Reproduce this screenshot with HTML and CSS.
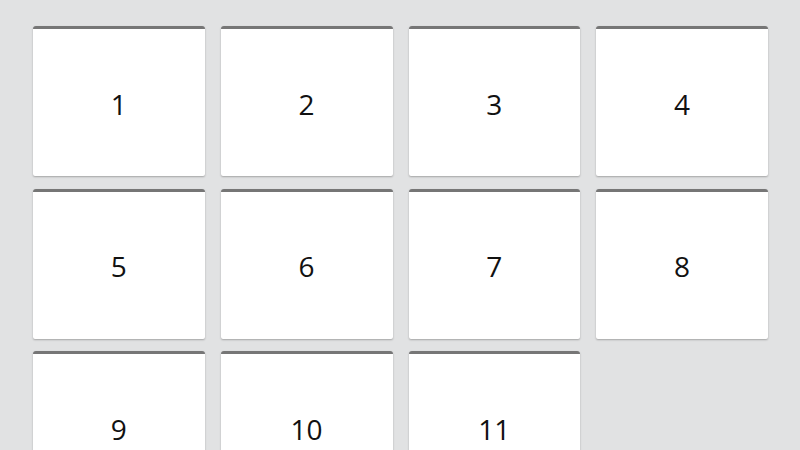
FILE: index.html
```html
<!DOCTYPE html>
<html>
<head>
<meta charset="utf-8">
<link rel="stylesheet" href="styles.css">
</head>
<body>
<div class="grid">
  <div class="card">1</div>
  <div class="card">2</div>
  <div class="card">3</div>
  <div class="card">4</div>
  <div class="card">5</div>
  <div class="card">6</div>
  <div class="card">7</div>
  <div class="card">8</div>
  <div class="card">9</div>
  <div class="card">10</div>
  <div class="card">11</div>
</div>
</body>
</html>
```
FILE: styles.css
```css
html, body {
  margin: 0;
  padding: 0;
  background: #e1e2e3;
  font-family: "Open Sans", "Noto Sans", sans-serif;
}
.grid {
  display: grid;
  grid-template-columns: repeat(4, 1fr);
  column-gap: 16px;
  row-gap: 12.5px;
  padding: 26px 32px 0 33px;
}
.card {
  height: 145px;
  background: #fff;
  border-top: 3px solid #767676;
  border-radius: 3px 3px 2px 2px;
  box-shadow: 0 1px 2px rgba(0, 0, 0, 0.28);
  display: flex;
  align-items: center;
  justify-content: center;
  font-size: 28px;
  color: #111;
  padding-top: 2px;
  box-sizing: content-box;
}
```
